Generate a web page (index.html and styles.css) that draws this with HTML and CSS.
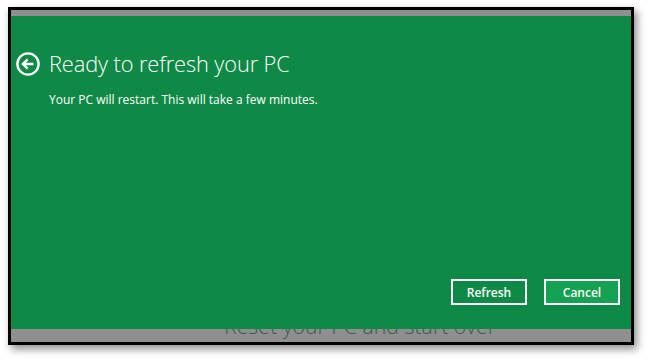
FILE: index.html
```html
<!DOCTYPE html>
<html>
<head>
<meta charset="utf-8">
<link rel="stylesheet" href="styles.css">
</head>
<body>
<div class="frame">
  <div class="top-strip"></div>
  <div class="panel">
    <div class="header">
      <svg class="back" width="24" height="24" viewBox="0 0 24 24">
        <circle cx="12" cy="12" r="10.6" fill="none" stroke="#fff" stroke-width="2.4"/>
        <path d="M17.5 12H7.2M11.6 7.3L6.9 12l4.7 4.7" fill="none" stroke="#fff" stroke-width="2.4" stroke-linecap="butt" stroke-linejoin="miter"/>
      </svg>
      <h1 class="title">Ready to refresh your PC</h1>
    </div>
    <p class="message">Your PC will restart. This will take a few minutes.</p>
    <div class="actions">
      <button class="btn">Refresh</button>
      <button class="btn btn-alt">Cancel</button>
    </div>
  </div>
  <div class="bottom-strip">
    <div class="behind">Reset your PC and start over</div>
  </div>
</div>
</body>
</html>
```
FILE: styles.css
```css
html, body {
  margin: 0;
  padding: 0;
  background: #fff;
  width: 650px;
  height: 360px;
  overflow: hidden;
}
body {
  padding: 7px 0 0 8px;
  box-sizing: border-box;
  font-family: "Open Sans", "Liberation Sans", sans-serif;
}
.frame {
  width: 620px;
  height: 332px;
  border: 3px solid #000;
  box-shadow: 3px 4px 8px rgba(0, 0, 0, 0.45);
  display: flex;
  flex-direction: column;
  background: #8f8f8f;
}
.top-strip {
  height: 6px;
  background: #8f8f8f;
}
.panel {
  height: 313px;
  background: #0f8946;
  box-sizing: border-box;
  padding: 35px 11px 24px 5px;
  display: flex;
  flex-direction: column;
  position: relative;
  z-index: 1;
}
.header {
  display: flex;
  align-items: center;
  gap: 9px;
}
.back {
  display: block;
}
.title {
  margin: 0;
  font-weight: 300;
  font-size: 21.8px;
  line-height: 26px;
  color: #fff;
  letter-spacing: -0.1px;
}
.message {
  margin: 15px 0 0 33px;
  font-size: 12px;
  line-height: 16px;
  color: #fff;
}
.actions {
  margin-top: auto;
  display: flex;
  justify-content: flex-end;
  gap: 17px;
}
.btn {
  width: 76px;
  height: 26px;
  border: 2px solid #fff;
  background: #0f8946;
  color: #fff;
  font-family: "Open Sans", "Liberation Sans", sans-serif;
  font-weight: 600;
  font-size: 12px;
  padding: 0;
  margin: 0;
}
.btn-alt {
  background: #14a152;
}
.bottom-strip {
  height: 13px;
  background: #8f8f8f;
  overflow: hidden;
  padding-left: 213px;
}
.behind {
  margin-top: -18px;
  font-weight: 300;
  font-size: 21.3px;
  line-height: 30px;
  color: #3a5b4a;
  white-space: nowrap;
}
```
